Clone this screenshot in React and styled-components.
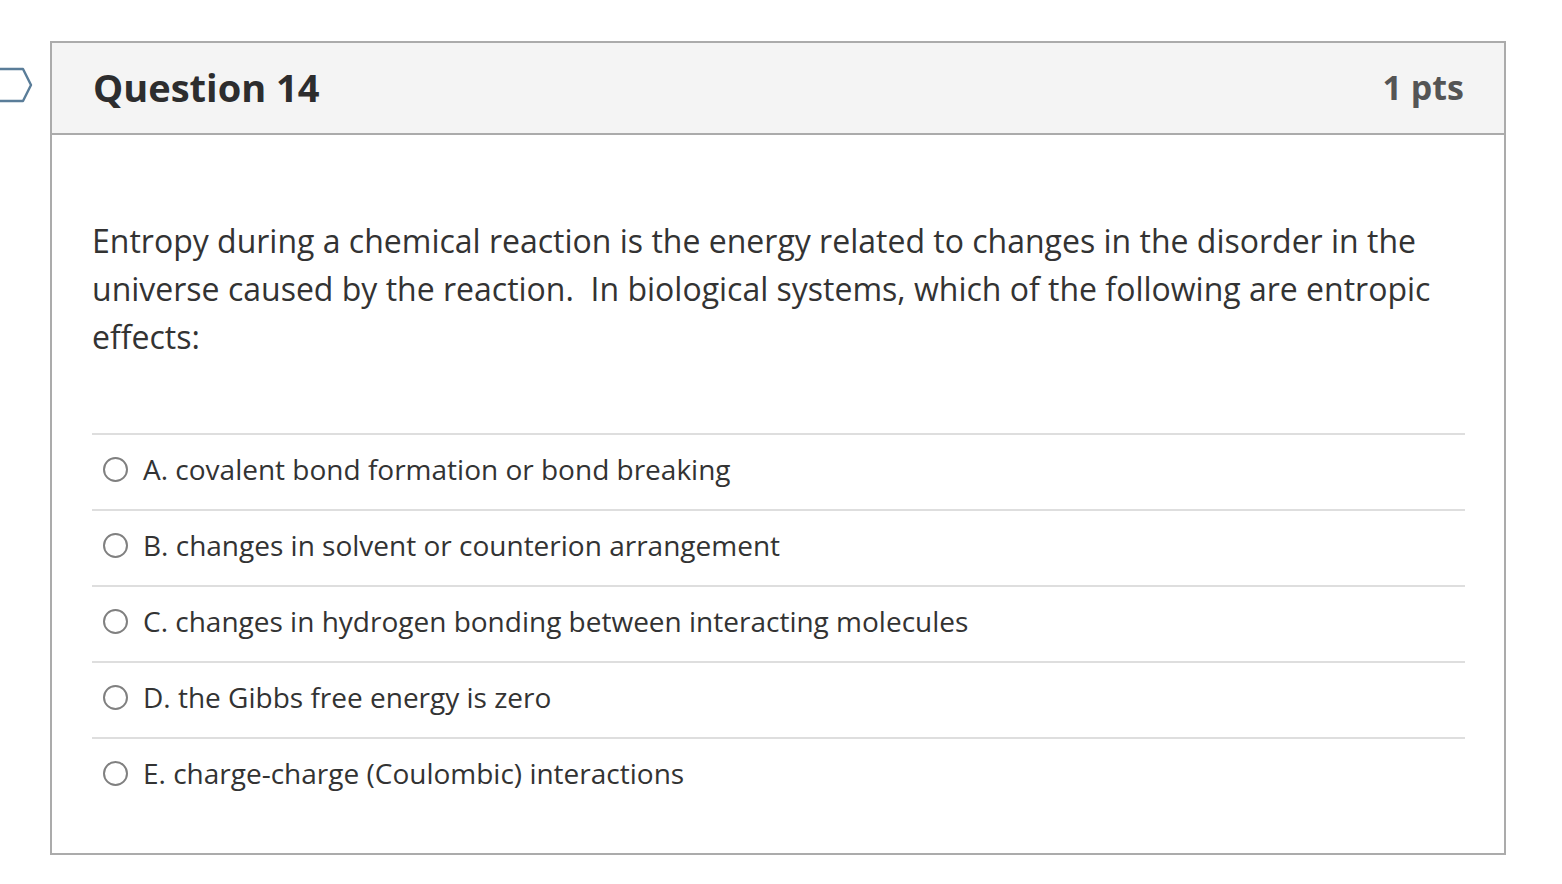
import React from "react";
import styled, { createGlobalStyle } from "styled-components";

const GlobalStyle = createGlobalStyle`
  html, body {
    margin: 0;
    padding: 0;
    background: #ffffff;
    font-family: "Open Sans", "Liberation Sans", sans-serif;
    color: #333333;
  }
`;

const Page = styled.div`
  display: flex;
  align-items: flex-start;
  padding-top: 41px;
`;

const Gutter = styled.div`
  width: 50px;
  flex: none;
  display: flex;
  padding-top: 26px;
`;

const Card = styled.section`
  width: 1456px;
  box-sizing: border-box;
  border: 2px solid #ababab;
  background: #fff;
`;

const Header = styled.header`
  height: 92px;
  box-sizing: border-box;
  display: flex;
  align-items: center;
  justify-content: space-between;
  padding: 0 40px 2px 41px;
  background: #f4f4f4;
  border-bottom: 2px solid #ababab;
`;

const Title = styled.h2`
  margin: 0;
  font-size: 38px;
  font-weight: 700;
  color: #2d2d2e;
`;

const Points = styled.span`
  font-size: 34px;
  font-weight: 700;
  color: #555555;
`;

const Body = styled.div`
  padding: 82px 39px 40px 40px;
`;

const Prompt = styled.p`
  margin: 0 0 72px;
  font-size: 32px;
  line-height: 48px;
  color: #333333;
`;

const Answers = styled.div`
  display: flex;
  flex-direction: column;
`;

const Answer = styled.label`
  height: 76px;
  box-sizing: border-box;
  border-top: 2px solid #dedede;
  display: flex;
  align-items: center;
  gap: 15px;
  padding: 0 0 6px 11px;
  font-size: 28px;
  color: #333333;
  cursor: pointer;
`;

const Radio = styled.span`
  width: 25px;
  height: 25px;
  box-sizing: border-box;
  border: 2px solid #808080;
  border-radius: 50%;
  flex: none;
`;

const Marker = () => (
  <svg width="34" height="36" viewBox="0 0 34 36">
    <path
      d="M0 2 H23 L31 18 L23 34 H0"
      fill="none"
      stroke="#5a7d99"
      strokeWidth="2.4"
      strokeLinejoin="round"
    />
  </svg>
);

const answers = [
  "A. covalent bond formation or bond breaking",
  "B. changes in solvent or counterion arrangement",
  "C. changes in hydrogen bonding between interacting molecules",
  "D. the Gibbs free energy is zero",
  "E. charge-charge (Coulombic) interactions",
];

export default function App() {
  return (
    <>
      <GlobalStyle />
      <Page>
        <Gutter>
          <Marker />
        </Gutter>
        <Card>
          <Header>
            <Title>Question 14</Title>
            <Points>1 pts</Points>
          </Header>
          <Body>
            <Prompt>
              Entropy during a chemical reaction is the energy related to changes in the disorder in the
              universe caused by the reaction.&nbsp; In biological systems, which of the following are
              entropic effects:
            </Prompt>
            <Answers>
              {answers.map((a) => (
                <Answer key={a}>
                  <Radio />
                  {a}
                </Answer>
              ))}
            </Answers>
          </Body>
        </Card>
      </Page>
    </>
  );
}
